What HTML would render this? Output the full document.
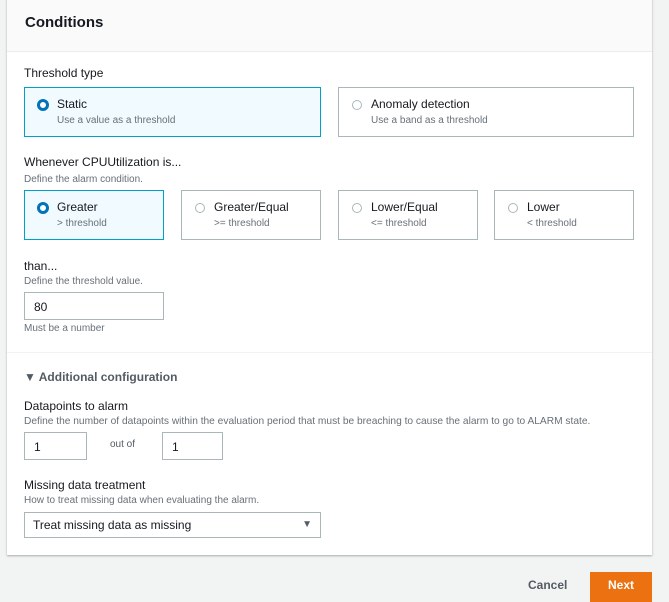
<!DOCTYPE html>
<html><head><style>
body{margin:0;width:669px;height:592px;background:#f2f3f3;font-family:"Liberation Sans",sans-serif;color:#16191f;position:relative;overflow:hidden}
.card{position:absolute;left:7px;top:-2px;width:645px;height:557px;background:#fff;box-shadow:0 1px 2px rgba(0,0,0,.3);}
.hdr{position:absolute;left:0;top:0;width:645px;height:53px;background:#fafafa;border-bottom:1px solid #eaeded}
.t{position:absolute;white-space:nowrap}
.lab{font-size:12px}
.sub{font-size:10px;color:#687078}
.tile{position:absolute;box-sizing:border-box;border:1px solid #aab7b8;background:#fff;height:50px}
.tile.sel{border-color:#00a1c9;background:#f1faff}
.tile .r{position:absolute;left:13px;top:12px;width:10px;height:10px;border-radius:50%;border:1px solid #aab7b8;box-sizing:border-box}
.tile.sel .r{border:3px solid #0073bb;background:#fff;width:12px;height:12px;left:12px;top:11px}
.tile .a{position:absolute;left:32px;top:9px;font-size:12px}
.tile .b{position:absolute;left:32px;top:27px;font-size:10px;color:#687078}
.inp{position:absolute;box-sizing:border-box;border:1px solid #aab7b8;background:#fff;height:28px;font-size:12px;padding:7px 9px}
</style></head><body>
<div class="card">
<div class="hdr"></div>
<div class="t" style="left:18px;top:16px;font-size:15px;font-weight:bold">Conditions</div>
<div class="t lab" style="left:17px;top:68px">Threshold type</div>
<div class="tile sel" style="left:17px;top:89px;width:297px"><div class="r"></div><div class="a">Static</div><div class="b">Use a value as a threshold</div></div>
<div class="tile" style="left:331px;top:89px;width:296px"><div class="r"></div><div class="a">Anomaly detection</div><div class="b">Use a band as a threshold</div></div>
<div class="t lab" style="left:17px;top:157px">Whenever CPUUtilization is...</div>
<div class="t sub" style="left:17px;top:176px">Define the alarm condition.</div>
<div class="tile sel" style="left:17px;top:192px;width:140px"><div class="r"></div><div class="a">Greater</div><div class="b">&gt; threshold</div></div>
<div class="tile" style="left:174px;top:192px;width:140px"><div class="r"></div><div class="a">Greater/Equal</div><div class="b">&gt;= threshold</div></div>
<div class="tile" style="left:331px;top:192px;width:140px"><div class="r"></div><div class="a">Lower/Equal</div><div class="b">&lt;= threshold</div></div>
<div class="tile" style="left:487px;top:192px;width:140px"><div class="r"></div><div class="a">Lower</div><div class="b">&lt; threshold</div></div>
<div class="t lab" style="left:17px;top:261px">than...</div>
<div class="t sub" style="left:17px;top:278px">Define the threshold value.</div>
<div class="inp" style="left:17px;top:294px;width:140px">80</div>
<div class="t sub" style="left:17px;top:325px">Must be a number</div>
<div style="position:absolute;left:0;top:354px;width:645px;border-top:1px solid #f2f3f3"></div>
<div class="t" style="left:17px;top:372px;font-size:12px;font-weight:bold;color:#545b64">▼ Additional configuration</div>
<div class="t lab" style="left:17px;top:401px">Datapoints to alarm</div>
<div class="t sub" style="left:17px;top:418px;font-size:10.2px">Define the number of datapoints within the evaluation period that must be breaching to cause the alarm to go to ALARM state.</div>
<div class="inp" style="left:17px;top:434px;width:63px">1</div>
<div class="t sub" style="left:103px;top:441px;color:#545b64">out of</div>
<div class="inp" style="left:155px;top:434px;width:61px">1</div>
<div class="t lab" style="left:17px;top:480px">Missing data treatment</div>
<div class="t sub" style="left:17px;top:497px">How to treat missing data when evaluating the alarm.</div>
<div class="inp" style="left:17px;top:514px;width:297px;height:26px;padding:5px 8px">Treat missing data as missing<span style="position:absolute;right:8px;top:6px;font-size:10px;color:#545b64">▼</span></div>
</div>
<div class="t" style="left:528px;top:578px;font-size:12px;font-weight:bold;color:#545b64">Cancel</div>
<div style="position:absolute;left:590px;top:572px;width:62px;height:30px;background:#ec7211;color:#fff;font-size:12px;font-weight:bold;text-align:center;line-height:26px">Next</div>
</body></html>
